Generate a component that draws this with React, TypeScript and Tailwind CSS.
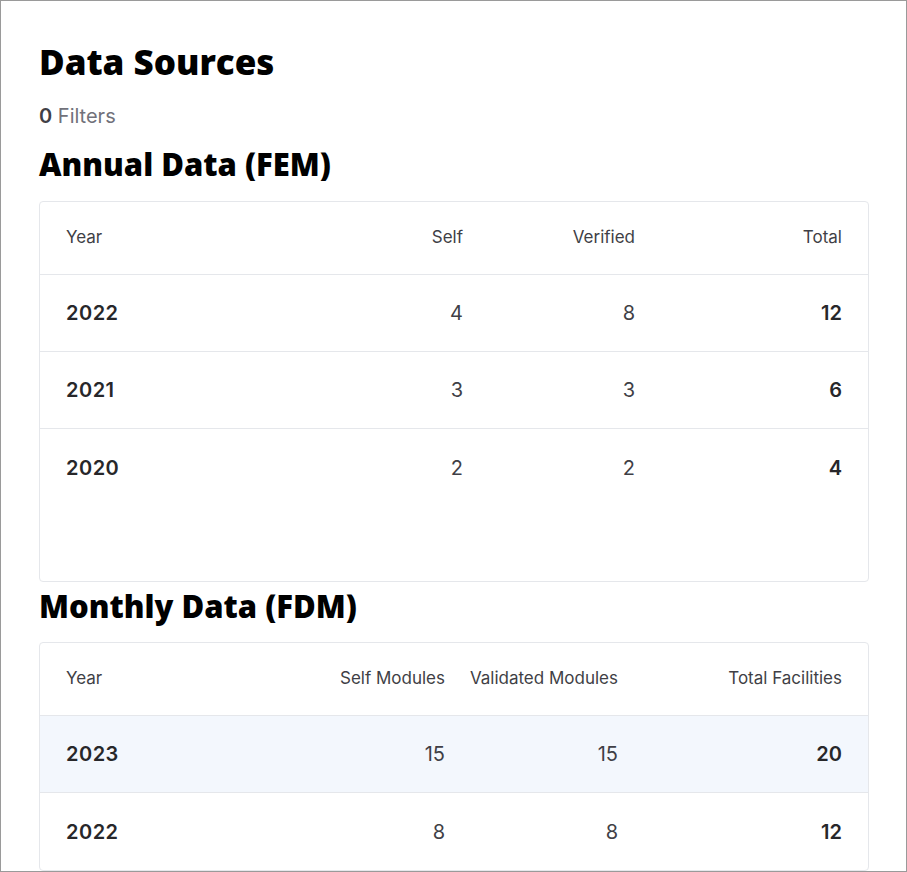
import React from "react";

const head = { fontFamily: "'Open Sans', 'Noto Sans', sans-serif" };
const body = { fontFamily: "Inter, 'Noto Sans', sans-serif" };

function Table({ cols, headers, rows, highlight, minH }: { cols: string; headers: string[]; rows: (string | number)[][]; highlight?: number; minH?: string }) {
  return (
    <div className={`border border-[#e5e7eb] rounded-[4px] ${minH ?? ""}`} style={body}>
      <div className={`grid ${cols} h-[73px] items-center px-[26px] text-[17px] text-[#3f3f46] border-b border-[#e5e7eb]`}>
        {headers.map((h, i) => (
          <div key={i} className={i === 0 ? "" : "text-right whitespace-nowrap"}>{h}</div>
        ))}
      </div>
      {rows.map((r, ri) => (
        <div key={ri} className={`grid ${cols} h-[77px] items-center px-[26px] text-[20px] text-[#3f3f46] ${ri < rows.length - 1 ? "border-b border-[#e5e7eb]" : ""} ${highlight === ri ? "bg-[#f3f7fd]" : ""}`}>
          {r.map((c, ci) => (
            <div key={ci} className={ci === 0 ? "font-semibold text-[#27272a] tracking-[0.5px]" : ci === r.length - 1 ? "text-right font-semibold text-[#27272a]" : "text-right"}>{c}</div>
          ))}
        </div>
      ))}
    </div>
  );
}

export default function App() {
  return (
    <div className="w-[907px] h-[872px] border border-[#9a9a9a] bg-white overflow-hidden">
      <div className="pl-[38px] pr-[37px] pt-[38px]">
        <h1 className="text-[35px] font-extrabold text-black leading-[46px]" style={head}>Data Sources</h1>
        <div className="mt-[18px] text-[20px] text-[#71717a] leading-[26px]" style={body}><span className="font-semibold text-[#3f3f46]">0</span> Filters</div>
        <h2 className="mt-[15px] text-[31px] font-extrabold text-black leading-[40px]" style={head}>Annual Data (FEM)</h2>
        <div className="mt-[17px]">
          <Table cols="grid-cols-[1fr_172px_172px_207px]" headers={["Year", "Self", "Verified", "Total"]} rows={[["2022", 4, 8, 12], ["2021", 3, 3, 6], ["2020", 2, 2, 4]]} minH="h-[381px]" />
        </div>
        <h2 className="mt-[4px] text-[31px] font-extrabold text-black leading-[40px]" style={head}>Monthly Data (FDM)</h2>
        <div className="mt-[16px]">
          <Table cols="grid-cols-[1fr_173px_173px_224px]" headers={["Year", "Self Modules", "Validated Modules", "Total Facilities"]} rows={[["2023", 15, 15, 20], ["2022", 8, 8, 12]]} highlight={0} />
        </div>
      </div>
    </div>
  );
}
